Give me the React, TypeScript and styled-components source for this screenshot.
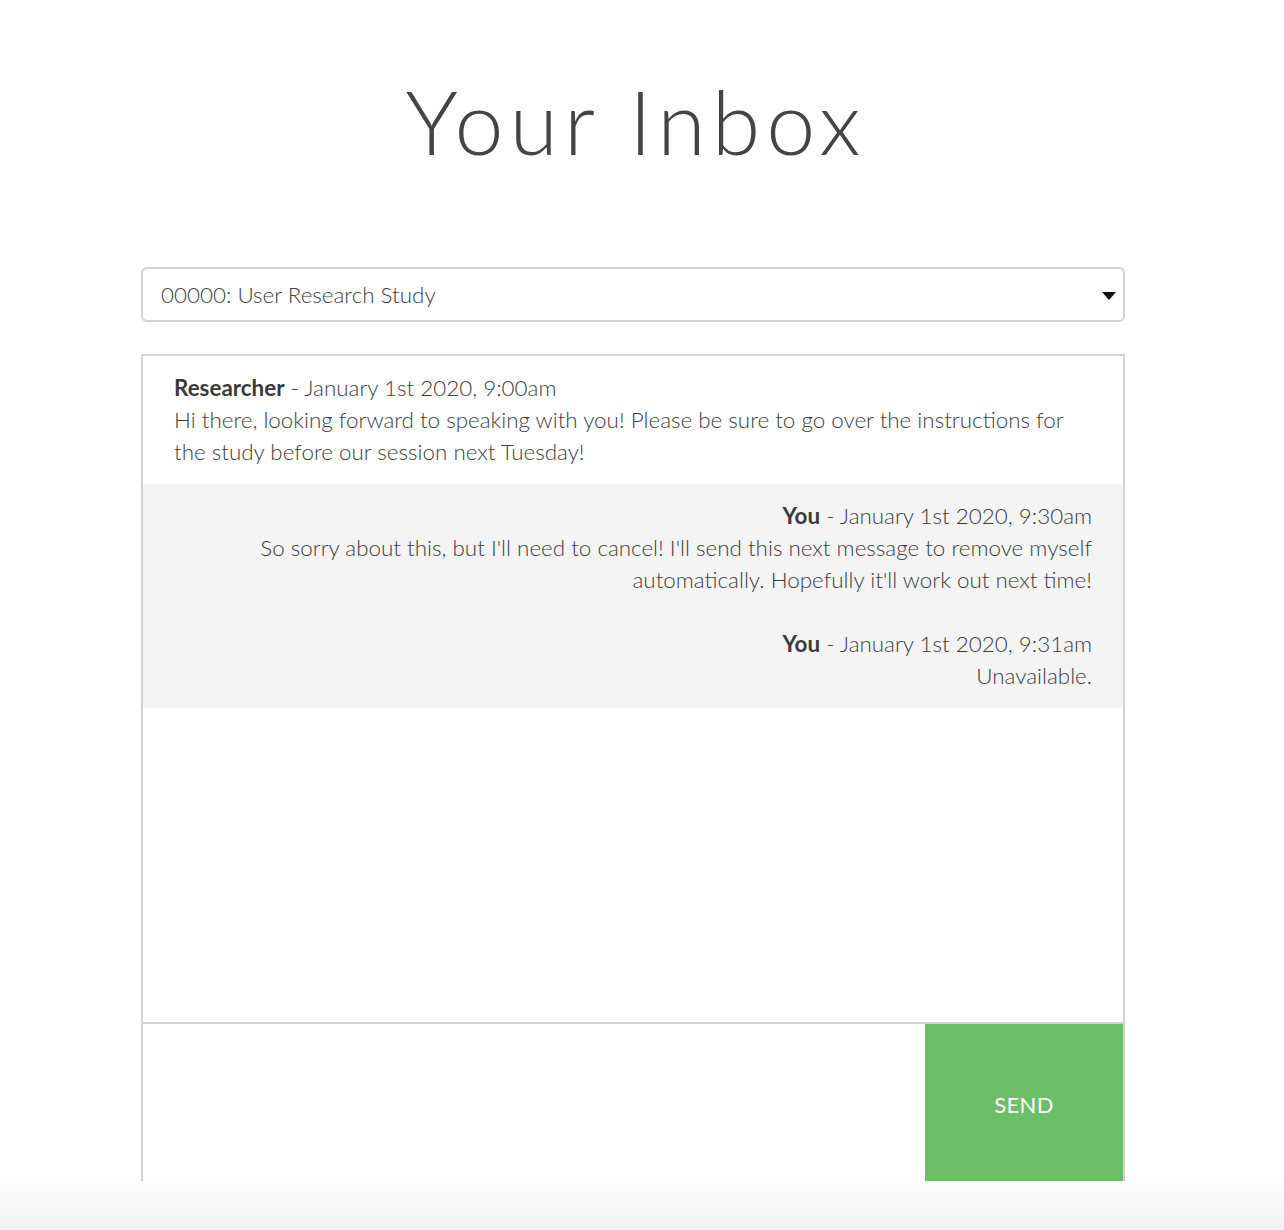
import React from 'react';
import styled, { createGlobalStyle } from 'styled-components';

const GlobalStyle = createGlobalStyle`
  html, body {
    margin: 0;
    padding: 0;
    background: #fff;
  }
  body {
    font-family: Lato, "Open Sans", Arial, sans-serif;
    color: #444;
  }
`;

const Page = styled.div`
  padding: 0 18px 0 0;
  display: flex;
  flex-direction: column;
  align-items: center;
`;

const Title = styled.h1`
  margin: 77px 0 0 6px;
  font-family: Lato, sans-serif;
  font-weight: 300;
  font-size: 88px;
  line-height: 88px;
  letter-spacing: 6px;
  color: #444;
`;

const Column = styled.div`
  width: 984px;
  margin-top: 102px;
  display: flex;
  flex-direction: column;
`;

const SelectWrap = styled.div`
  position: relative;
  height: 55px;
  border: 2px solid #d2d2d2;
  border-radius: 6px;
  box-sizing: border-box;
  display: flex;
  align-items: center;
  padding: 0 18px;
  font-size: 22.4px;
  font-weight: 300;
  color: #3d3d3d;
`;

const Caret = styled.span`
  position: absolute;
  right: 7px;
  top: 50%;
  margin-top: -3px;
  width: 0;
  height: 0;
  border-left: 7px solid transparent;
  border-right: 7px solid transparent;
  border-top: 8px solid #111;
`;

const Box = styled.div`
  margin-top: 32px;
  border: 2px solid #d2d2d2;
  border-bottom: none;
  display: flex;
  flex-direction: column;
`;

const Thread = styled.div`
  height: 666px;
  display: flex;
  flex-direction: column;
`;

const Message = styled.div<{ $mine?: boolean }>`
  padding: 16px 31px;
  background: ${(p) => (p.$mine ? '#f4f4f4' : '#fff')};
  text-align: ${(p) => (p.$mine ? 'right' : 'left')};
  font-size: 22.4px;
  font-weight: 300;
  line-height: 32px;
  color: #3d3d3d;
`;

const Sender = styled.strong`
  font-weight: 700;
  color: #3a3a3a;
`;

const Composer = styled.div`
  border-top: 2px solid #d2d2d2;
  height: 160px;
  display: flex;
`;

const Input = styled.textarea`
  flex: 1;
  border: none;
  outline: none;
  resize: none;
  padding: 16px;
  font-family: Lato, sans-serif;
  font-size: 22px;
`;

const SendButton = styled.button`
  width: 198px;
  border: none;
  background: #6dbe69;
  color: #fff;
  font-family: Lato, sans-serif;
  font-size: 22px;
  font-weight: 400;
  letter-spacing: 0.3px;
  padding: 0;
  cursor: pointer;
`;

const BottomFade = styled.div`
  position: fixed;
  left: 0;
  right: 0;
  bottom: 0;
  height: 49px;
  background: linear-gradient(#fefefe, #f2f2f2);
`;

const messages = [
  {
    mine: false,
    from: 'Researcher',
    time: 'January 1st 2020, 9:00am',
    text: 'Hi there, looking forward to speaking with you! Please be sure to go over the instructions for the study before our session next Tuesday!',
  },
  {
    mine: true,
    from: 'You',
    time: 'January 1st 2020, 9:30am',
    text: "So sorry about this, but I'll need to cancel! I'll send this next message to remove myself automatically. Hopefully it'll work out next time!",
  },
  {
    mine: true,
    from: 'You',
    time: 'January 1st 2020, 9:31am',
    text: 'Unavailable.',
  },
];

export default function App() {
  return (
    <>
      <GlobalStyle />
      <Page>
        <Title>Your Inbox</Title>
        <Column>
          <SelectWrap>
            00000: User Research Study
            <Caret />
          </SelectWrap>
          <Box>
            <Thread>
              {messages.map((m, i) => (
                <Message key={i} $mine={m.mine}>
                  <Sender>{m.from}</Sender> - {m.time}
                  <br />
                  {m.text}
                </Message>
              ))}
            </Thread>
            <Composer>
              <Input />
              <SendButton>SEND</SendButton>
            </Composer>
          </Box>
        </Column>
      </Page>
      <BottomFade />
    </>
  );
}
